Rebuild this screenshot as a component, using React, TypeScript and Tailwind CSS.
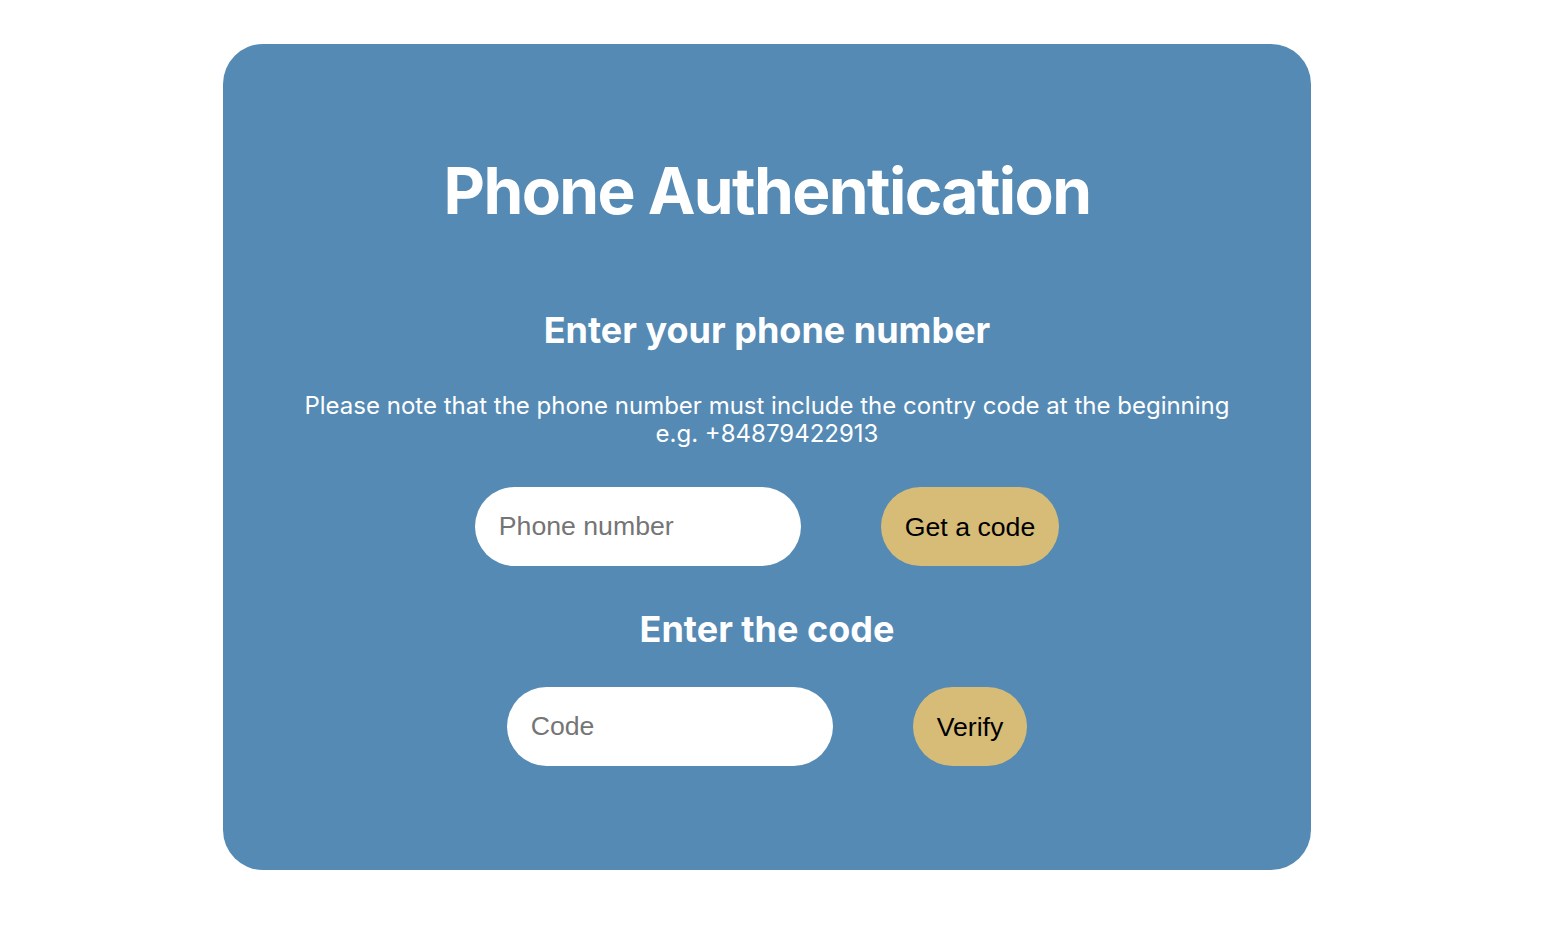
import React, { useState } from "react";

const fieldClass =
  "w-[326px] h-[79px] rounded-full bg-white px-6 text-[26.67px] text-black placeholder:text-[#757575] outline-none border-0";
const buttonClass =
  "h-[79px] rounded-full bg-[#d7bc77] px-6 text-[26.67px] text-black border-0 cursor-pointer";

export default function App() {
  const [phone, setPhone] = useState("");
  const [code, setCode] = useState("");

  return (
    <div className="min-h-[930px] bg-white pt-[44px]">
      <div className="ml-[223px] w-[1088px] rounded-[40px] bg-[#558ab4] pt-[108px] pb-[104px] text-center text-white font-['Inter',sans-serif]">
        <h1 className="text-[64px] leading-[77px] font-bold tracking-[-1.6px]">
          Phone Authentication
        </h1>

        <h2 className="mt-[79px] text-[36px] leading-[44px] font-bold">
          Enter your phone number
        </h2>
        <p className="mt-[40px] text-[24px] leading-[28px]">
          Please note that the phone number must include the contry code at the
          beginning
          <br />
          e.g. +84879422913
        </p>

        <div className="mt-[39px] flex justify-center gap-[80px] font-['Liberation_Sans',Arial,sans-serif]">
          <input
            type="text"
            value={phone}
            onChange={(e) => setPhone(e.target.value)}
            placeholder="Phone number"
            className={fieldClass}
          />
          <button type="button" className={buttonClass}>
            Get a code
          </button>
        </div>

        <h2 className="mt-[41px] text-[36px] leading-[44px] font-bold">
          Enter the code
        </h2>

        <div className="mt-[36px] flex justify-center gap-[80px] font-['Liberation_Sans',Arial,sans-serif]">
          <input
            type="text"
            value={code}
            onChange={(e) => setCode(e.target.value)}
            placeholder="Code"
            className={fieldClass}
          />
          <button type="button" className={buttonClass}>
            Verify
          </button>
        </div>
      </div>
    </div>
  );
}
